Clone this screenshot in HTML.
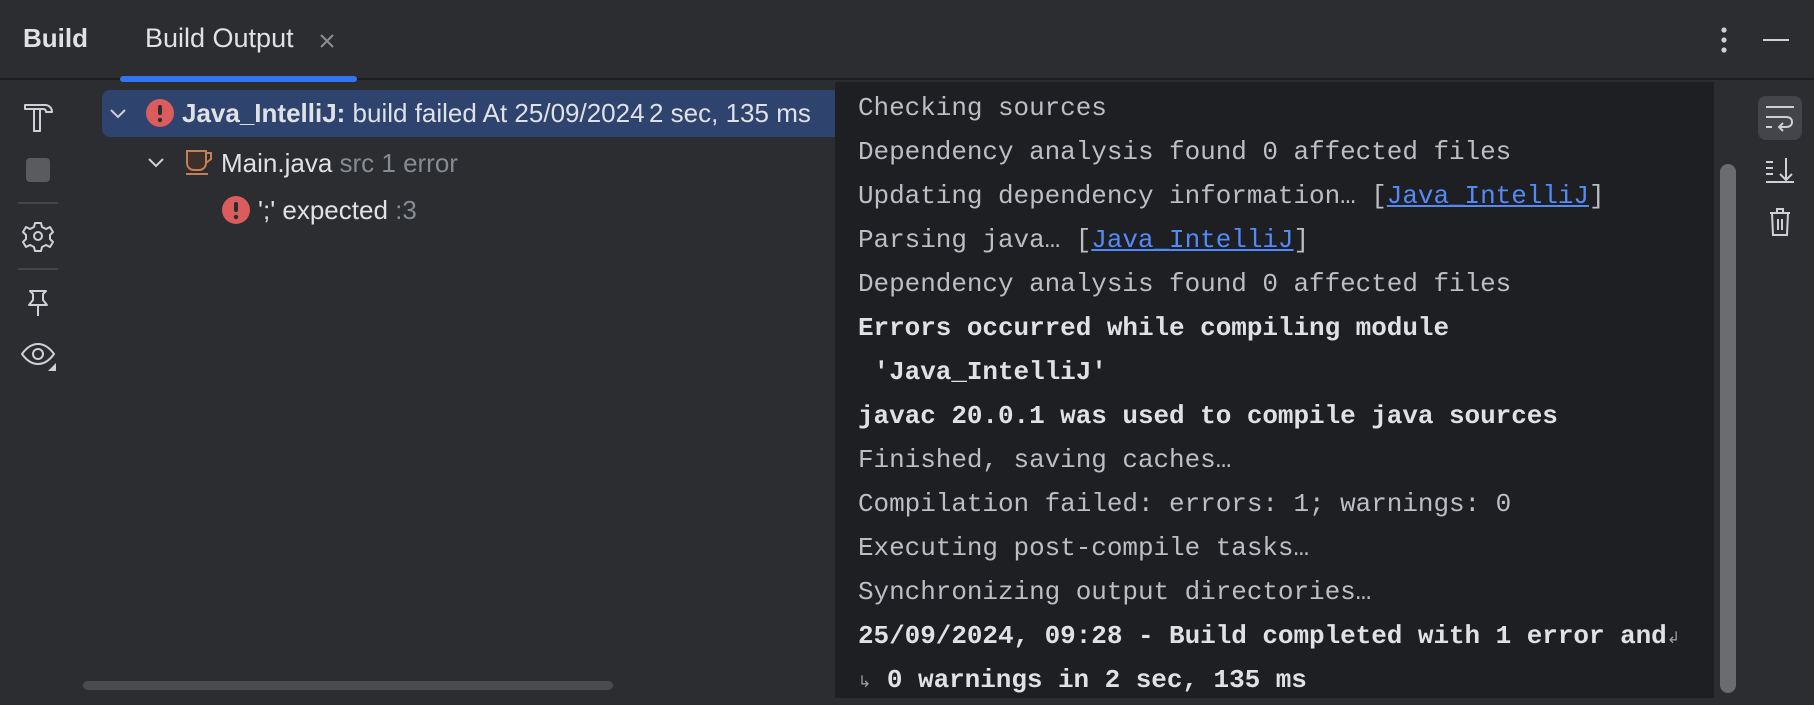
<!DOCTYPE html>
<html><head><meta charset="utf-8"><style>
*{margin:0;padding:0;box-sizing:border-box}
body{width:1814px;height:698px;background:#2b2d30;position:relative;overflow:hidden;font-family:"Liberation Sans",sans-serif;color:#dfe1e5}
.abs{position:absolute}
.hdr{left:0;top:0;width:1814px;height:80px;background:#2b2d30;border-bottom:2px solid #1e1f22}
.tree{font-size:26px;white-space:nowrap}
.con{left:835px;top:82px;width:879px;height:616px;background:#1e1f22}
.ln{position:absolute;left:23px;font-family:"Liberation Mono",monospace;font-size:26px;color:#bcbec4;white-space:pre;height:44px;line-height:44px;letter-spacing:-0.05px}
.b{font-weight:bold;color:#dfe1e5}
a{color:#548af7;text-decoration:underline}
.wm{font-size:16px;color:#9a9ca0;font-weight:normal}
</style></head><body>
<div class="abs hdr"></div>
<div class="abs" style="left:23px;top:23px;font-size:26px;font-weight:bold;color:#dfe1e5">Build</div>
<div class="abs" style="left:145px;top:23px;font-size:27px;color:#dfe1e5">Build Output</div>
<svg class="abs" style="left:318px;top:32px" width="18" height="18"><path d="M3 3L15 15M15 3L3 15" stroke="#8c8e92" stroke-width="2"/></svg>
<div class="abs" style="left:120px;top:76px;width:237px;height:6px;background:#3574f0;border-radius:3px"></div>
<svg class="abs" style="left:1716px;top:24px" width="16" height="32"><circle cx="8" cy="6" r="2.6" fill="#ced0d6"/><circle cx="8" cy="16" r="2.6" fill="#ced0d6"/><circle cx="8" cy="26" r="2.6" fill="#ced0d6"/></svg>
<div class="abs" style="left:1763px;top:39px;width:26px;height:2px;background:#ced0d6"></div>

<!-- left toolbar -->
<svg class="abs" style="left:0;top:82px" width="80" height="300">
<g fill="none" stroke="#ced0d6" stroke-width="2" stroke-linejoin="round">
<path d="M25 23h20c4 0 7 3 7 7h-6c0-2-1-3-3-3h-3v22h-6V27h-9z"/>
<rect x="34" y="27" width="6" height="22" />
</g>
<rect x="26" y="76" width="24" height="24" rx="4" fill="#5a5b5e"/>
<rect x="18" y="120" width="40" height="2" fill="#43454a"/>
<g fill="none" stroke="#ced0d6" stroke-width="2" stroke-linejoin="round">
<path d="M35 141h6l1 4 4 2 4-2 3 5-3 3v4l3 3-3 5-4-2-4 2-1 4h-6l-1-4-4-2-4 2-3-5 3-3v-4l-3-3 3-5 4 2 4-2z"/>
<circle cx="38" cy="154" r="4"/>
</g>
<rect x="18" y="186" width="40" height="2" fill="#43454a"/>
<g fill="none" stroke="#ced0d6" stroke-width="2" stroke-linejoin="round">
<path d="M30 209h16l-3 3v6l4 5H29l4-5v-6z"/><path d="M38 223v11"/>
<path d="M22 272c5-7 11-10 16-10s11 3 16 10c-5 7-11 10-16 10s-11-3-16-10z"/>
<circle cx="38" cy="272" r="5"/>
</g>
<path d="M56 281v8h-8z" fill="#ced0d6"/>
</svg>

<!-- tree -->
<div class="abs" style="left:102px;top:90px;width:733px;height:47px;background:#2e436e;border-radius:8px 0 0 8px"></div>
<svg class="abs" style="left:108px;top:103px" width="20" height="20"><path d="M3 7l7 7 7-7" fill="none" stroke="#ced0d6" stroke-width="2"/></svg>
<svg class="abs" style="left:146px;top:99px" width="28" height="28"><circle cx="14" cy="14" r="14" fill="#db5c5c"/><rect x="12" y="6" width="4" height="10" rx="2" fill="#2b2d30"/><circle cx="14" cy="21" r="2.2" fill="#2b2d30"/></svg>
<div class="abs tree" style="left:182px;top:98px;width:462px;overflow:hidden;color:#dfe1e5"><b>Java_IntelliJ:</b> build failed At 25/09/2024, 09:28</div>
<div class="abs tree" style="left:649px;top:98px;color:#dfe1e5">2 sec, 135 ms</div>
<svg class="abs" style="left:146px;top:152px" width="20" height="20"><path d="M3 7l7 7 7-7" fill="none" stroke="#ced0d6" stroke-width="2"/></svg>
<svg class="abs" style="left:184px;top:148px" width="32" height="28"><path d="M3 3h19v12c0 4-3 7-7 7h-5c-4 0-7-3-7-7z" fill="#3d3028" stroke="#c77d55" stroke-width="2"/><path d="M22 5h5v6l-5 4" fill="none" stroke="#c77d55" stroke-width="2"/><path d="M2 26h22" stroke="#c77d55" stroke-width="2"/></svg>
<div class="abs tree" style="left:221px;top:148px;color:#dfe1e5">Main.java <span style="color:#868a91">src 1 error</span></div>
<svg class="abs" style="left:222px;top:196px" width="28" height="28"><circle cx="14" cy="14" r="14" fill="#db5c5c"/><rect x="12" y="6" width="4" height="10" rx="2" fill="#2b2d30"/><circle cx="14" cy="21" r="2.2" fill="#2b2d30"/></svg>
<div class="abs tree" style="left:258px;top:195px;color:#dfe1e5">';' expected <span style="color:#868a91">:3</span></div>
<div class="abs" style="left:83px;top:681px;width:530px;height:9px;background:#4a4b4e;border-radius:5px"></div>

<!-- console -->
<div class="abs con">
<div class="ln" style="top:4px">Checking sources</div>
<div class="ln" style="top:48px">Dependency analysis found 0 affected files</div>
<div class="ln" style="top:92px">Updating dependency information… [<a>Java_IntelliJ</a>]</div>
<div class="ln" style="top:136px">Parsing java… [<a>Java_IntelliJ</a>]</div>
<div class="ln" style="top:180px">Dependency analysis found 0 affected files</div>
<div class="ln b" style="top:224px">Errors occurred while compiling module</div>
<div class="ln b" style="top:268px"> 'Java_IntelliJ'</div>
<div class="ln b" style="top:312px">javac 20.0.1 was used to compile java sources</div>
<div class="ln" style="top:356px">Finished, saving caches…</div>
<div class="ln" style="top:400px">Compilation failed: errors: 1; warnings: 0</div>
<div class="ln" style="top:444px">Executing post-compile tasks…</div>
<div class="ln" style="top:488px">Synchronizing output directories…</div>
<div class="ln b" style="top:532px">25/09/2024, 09:28 - Build completed with 1 error and<span class="wm">↲</span></div>
<div class="ln b" style="top:576px"><span class="wm">↳</span> 0 warnings in 2 sec, 135 ms</div>
</div>
<div class="abs" style="left:1720px;top:164px;width:16px;height:529px;background:#6b6c70;border-radius:8px"></div>

<!-- right toolbar -->
<div class="abs" style="left:1758px;top:96px;width:44px;height:44px;background:#43454a;border-radius:8px"></div>
<svg class="abs" style="left:1758px;top:96px" width="44" height="160">
<g fill="none" stroke="#ced0d6" stroke-width="2">
<path d="M8 11h28M8 21h20c4 0 6 2 6 5s-2 5-6 5h-6M25 27l-4 4 4 4M8 31h6"/>
<path d="M8 66h7M8 72h7M8 78h7M8 86h28M28 62v22M22 78l6 6 6-6"/>
<path d="M12 117h20M19 117v-4h6v4M14 117l1 22h14l1-22M20 123v11M24 123v11"/>
</g>
</svg>
</body></html>
